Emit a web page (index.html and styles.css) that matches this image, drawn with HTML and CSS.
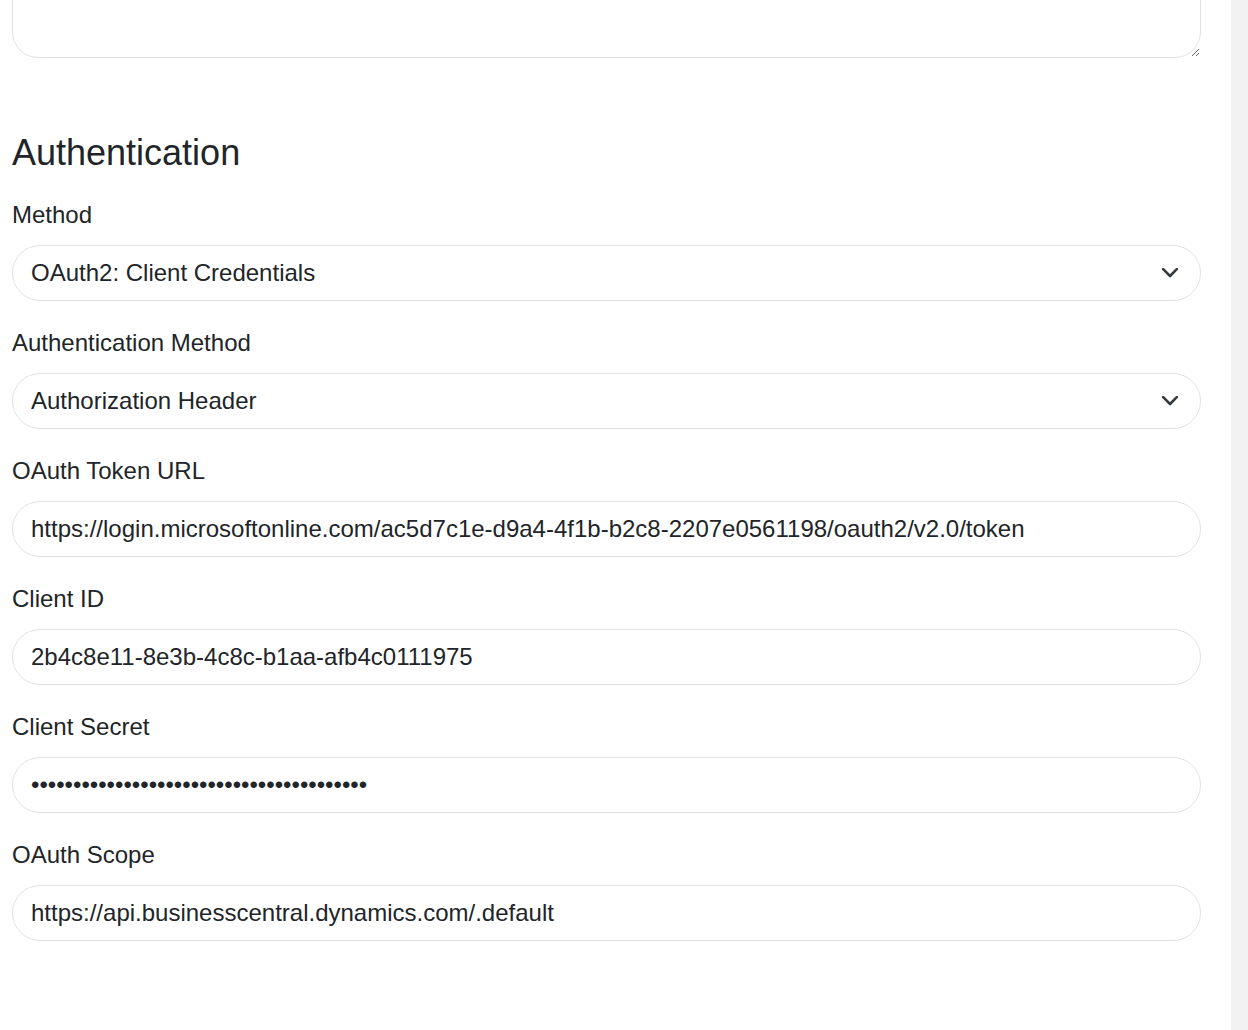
FILE: index.html
```html
<!DOCTYPE html>
<html lang="en">
<head>
<meta charset="utf-8">
<title>Authentication</title>
<link rel="stylesheet" href="styles.css">
</head>
<body>
<div class="page">
  <main class="content">
    <textarea class="notes" aria-label="Description"></textarea>

    <h2 class="section-title">Authentication</h2>

    <div class="field">
      <label class="field-label" for="method">Method</label>
      <div class="select-wrap">
        <select id="method" class="control select">
          <option>OAuth2: Client Credentials</option>
        </select>
        <svg class="chevron" viewBox="0 0 16 10" width="16" height="10" aria-hidden="true"><path d="M1.2 1.2 8 8 14.8 1.2" fill="none" stroke="#343a40" stroke-width="2.6" stroke-linecap="round" stroke-linejoin="round"/></svg>
      </div>
    </div>

    <div class="field">
      <label class="field-label" for="authmethod">Authentication Method</label>
      <div class="select-wrap">
        <select id="authmethod" class="control select">
          <option>Authorization Header</option>
        </select>
        <svg class="chevron" viewBox="0 0 16 10" width="16" height="10" aria-hidden="true"><path d="M1.2 1.2 8 8 14.8 1.2" fill="none" stroke="#343a40" stroke-width="2.6" stroke-linecap="round" stroke-linejoin="round"/></svg>
      </div>
    </div>

    <div class="field">
      <label class="field-label" for="tokenurl">OAuth Token URL</label>
      <input id="tokenurl" class="control" type="text" value="https://login.microsoftonline.com/ac5d7c1e-d9a4-4f1b-b2c8-2207e0561198/oauth2/v2.0/token">
    </div>

    <div class="field">
      <label class="field-label" for="clientid">Client ID</label>
      <input id="clientid" class="control" type="text" value="2b4c8e11-8e3b-4c8c-b1aa-afb4c0111975">
    </div>

    <div class="field">
      <label class="field-label" for="secret">Client Secret</label>
      <input id="secret" class="control" type="password" value="abcdefghijabcdefghijabcdefghijabcdefghij">
    </div>

    <div class="field">
      <label class="field-label" for="scope">OAuth Scope</label>
      <input id="scope" class="control" type="text" value="https://api.businesscentral.dynamics.com/.default">
    </div>
  </main>
  <div class="scroll-track"></div>
</div>
</body>
</html>
```

FILE: styles.css
```css
html, body {
  margin: 0;
  padding: 0;
  background: #ffffff;
}

body {
  font-family: "Liberation Sans", Arial, sans-serif;
  font-size: 24px;
  color: #212529;
}

.page {
  display: flex;
  height: 1030px;
  overflow: hidden;
}

.content {
  flex: 1;
  min-width: 0;
  padding: 0 30px 0 12px;
}

.scroll-track {
  width: 17px;
  flex: none;
  background: #f2f2f2;
}

.notes {
  display: block;
  box-sizing: border-box;
  width: 100%;
  height: 118px;
  margin: -60px 0 0;
  border: 1px solid #dee2e6;
  border-radius: 26px;
  background: #fff;
  font: inherit;
  outline: none;
}

.section-title {
  margin: 73px 0 23px;
  font-size: 36px;
  font-weight: 400;
  line-height: 1.2;
  color: #212529;
}

.field {
  margin-bottom: 24px;
}

.field-label {
  display: block;
  line-height: 36px;
  margin-bottom: 12px;
}

.control {
  display: block;
  box-sizing: border-box;
  width: 100%;
  height: 56px;
  margin: 0;
  padding: 0 18px;
  border: 1px solid #dee2e6;
  border-radius: 28px;
  background: #fff;
  font-family: inherit;
  font-size: 24px;
  color: #212529;
  outline: none;
}

.select {
  appearance: none;
  -webkit-appearance: none;
  padding: 0 60px 2px 18px;
}

.select-wrap {
  position: relative;
}

.chevron {
  position: absolute;
  right: 23px;
  top: 23px;
  pointer-events: none;
}
```
